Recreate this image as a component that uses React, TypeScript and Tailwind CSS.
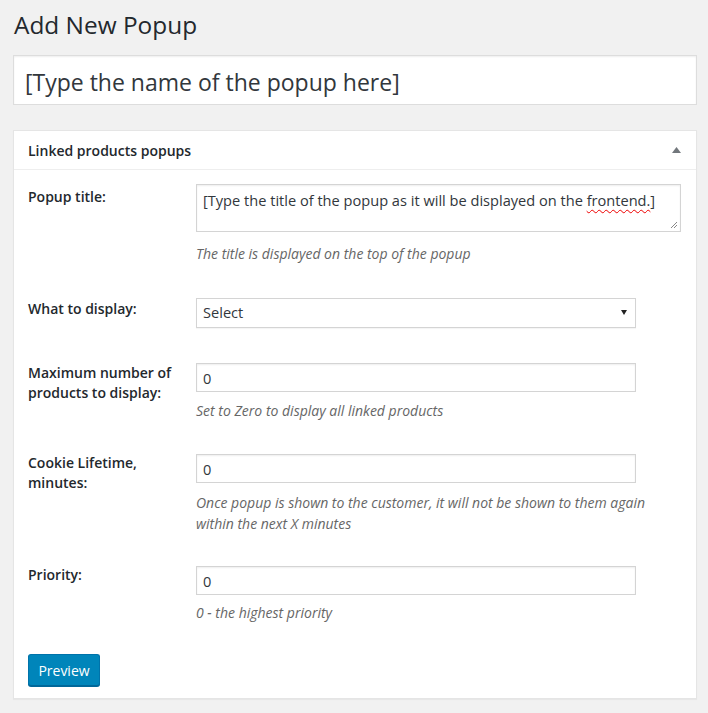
import type { ReactNode } from "react";

const font = { fontFamily: '"Open Sans", "Noto Sans", sans-serif' };

type RowProps = {
  label: ReactNode;
  labelOffset?: string;
  className?: string;
  children: ReactNode;
};

function Row({ label, labelOffset = "mt-0", className = "", children }: RowProps) {
  return (
    <div className={`flex ${className}`}>
      <div className={`w-[168px] shrink-0 text-[14px] font-semibold leading-[20px] text-[#23282d] ${labelOffset}`}>
        {label}
      </div>
      <div className="flex flex-col">{children}</div>
    </div>
  );
}

function Hint({ children, className = "mt-[8px]" }: { children: ReactNode; className?: string }) {
  return <p className={`text-[14px] italic leading-[21px] text-[#666] ${className}`}>{children}</p>;
}

function TextField({ value }: { value: string }) {
  return (
    <input
      className="h-[29px] w-[440px] border border-[#d4d4d4] bg-white px-[6px] text-[14.6px] text-[#32373c] shadow-[inset_0_1px_2px_rgba(0,0,0,0.07)] outline-none"
      defaultValue={value}
      type="text"
    />
  );
}

export default function App() {
  return (
    <main className="min-h-screen bg-[#f1f1f1] pb-4 pl-[13px] pr-[11px] pt-[10px]" style={font}>
      <h1 className="pl-[1px] text-[24.4px] font-normal leading-[30px] text-[#23282d]">Add New Popup</h1>

      <input
        className="mt-[15px] h-[50px] w-full border border-[#dddddd] bg-white px-[11px] pt-[3px] text-[23px] text-[#32373c] shadow-[inset_0_1px_2px_rgba(0,0,0,0.07)] outline-none"
        defaultValue="[Type the name of the popup here]"
        type="text"
      />

      <section className="mt-[25px] border border-[#e5e5e5] bg-white shadow-[0_1px_1px_rgba(0,0,0,0.04)]">
        <header className="flex h-[39px] items-center justify-between border-b border-[#eeeeee] pl-[14px] pr-[15px]">
          <h2 className="pt-[1px] text-[14px] font-semibold text-[#23282d]">Linked products popups</h2>
          <svg width="9" height="6" viewBox="0 0 9 6" className="mt-[-1px]">
            <path d="M4.5 0 L9 6 L0 6 Z" fill="#72777c" />
          </svg>
        </header>

        <div className="flex flex-col px-[14px] pb-[12px]">
          <Row label="Popup title:" labelOffset="mt-[3px]" className="mt-[14px]">
            <div className="relative h-[48px] w-[485px] border border-[#d4d4d4] bg-white px-[6px] pt-[5px] text-[14.6px] leading-[20px] text-[#32373c] shadow-[inset_0_1px_2px_rgba(0,0,0,0.07)]">
              [Type the title of the popup as it will be displayed on the{" "}
              <span className="underline decoration-[#e00] decoration-wavy decoration-1 underline-offset-[3px]">
                frontend.
              </span>
              ]
              <svg width="8" height="8" viewBox="0 0 8 8" className="absolute bottom-[2px] right-[2px]">
                <path d="M1 7 L7 1 M4 7 L7 4" stroke="#888" strokeWidth="1" />
              </svg>
            </div>
            <Hint className="mt-[11px]">The title is displayed on the top of the popup</Hint>
          </Row>

          <Row label="What to display:" labelOffset="mt-[1px]" className="mt-[34px]">
            <div className="relative w-[440px]">
              <select
                className="h-[30px] w-full appearance-none border border-[#d4d4d4] bg-white px-[6px] text-[14.6px] text-[#32373c] shadow-[0_1px_1px_rgba(0,0,0,0.04)] outline-none"
                defaultValue="select"
              >
                <option value="select">Select</option>
              </select>
              <svg width="6" height="5" viewBox="0 0 6 5" className="pointer-events-none absolute right-[9px] top-[12px]">
                <path d="M0 0 L6 0 L3 5 Z" fill="#222" />
              </svg>
            </div>
          </Row>

          <Row
            label={
              <>
                Maximum number of
                <br />
                products to display:
              </>
            }
            className="mt-[35px]"
          >
            <TextField value="0" />
            <Hint>Set to Zero to display all linked products</Hint>
          </Row>

          <Row
            label={
              <>
                Cookie Lifetime,
                <br />
                minutes:
              </>
            }
            labelOffset="mt-[-1px]"
            className="mt-[33px]"
          >
            <TextField value="0" />
            <Hint className="mt-[9px] w-[460px]">
              Once popup is shown to the customer, it will not be shown to them again within the next X minutes
            </Hint>
          </Row>

          <Row label="Priority:" labelOffset="mt-[-1px]" className="mt-[32px]">
            <TextField value="0" />
            <Hint className="mt-[7px]">0 - the highest priority</Hint>
          </Row>

          <div className="mt-[31px]">
            <button
              className="h-[32px] w-[72px] rounded-[3px] border border-[#0073aa] border-b-[#006799] bg-[#0085ba] text-[14px] text-white shadow-[0_1px_0_#006799]"
              type="button"
            >
              Preview
            </button>
          </div>
        </div>
      </section>
    </main>
  );
}
